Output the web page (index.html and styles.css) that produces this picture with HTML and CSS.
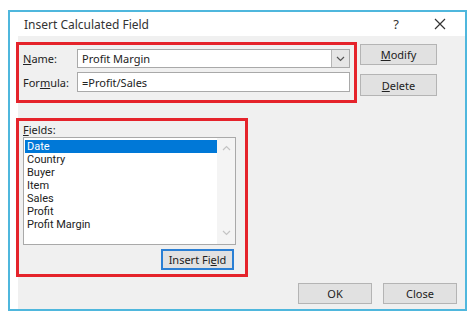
FILE: index.html
```html
<!DOCTYPE html>
<html>
<head>
<meta charset="utf-8">
<link rel="stylesheet" href="styles.css">
</head>
<body>
<div class="dialog">
  <div class="titlebar">
    <span class="title">Insert Calculated Field</span>
    <span class="help">?</span>
    <svg class="close-x" width="12" height="12" viewBox="0 0 12 12"><path d="M1 1 L11 11 M11 1 L1 11" stroke="#333" stroke-width="1.2" fill="none"/></svg>
  </div>
  <div class="content">
    <div class="top-row">
      <div class="mark mark-top">
        <label class="lbl"><u>N</u>ame:</label>
        <div class="combo">
          <span class="field-text">Profit Margin</span>
          <span class="drop">
            <svg width="9" height="6" viewBox="0 0 9 6"><path d="M1 1 L4.5 4.5 L8 1" stroke="#555" stroke-width="1.2" fill="none"/></svg>
          </span>
        </div>
        <label class="lbl">For<u>m</u>ula:</label>
        <div class="input"><span class="field-text">=Profit/Sales</span></div>
      </div>
      <div class="side-buttons">
        <button class="btn btn-modify"><u>M</u>odify</button>
        <button class="btn btn-delete"><u>D</u>elete</button>
      </div>
    </div>
    <div class="mark mark-fields">
      <div class="fields-label"><u>F</u>ields:</div>
      <div class="listbox">
        <ul class="items">
          <li class="sel">Date</li>
          <li>Country</li>
          <li>Buyer</li>
          <li>Item</li>
          <li>Sales</li>
          <li>Profit</li>
          <li>Profit Margin</li>
        </ul>
        <div class="scroll">
          <svg width="9" height="6" viewBox="0 0 9 6"><path d="M1 5 L4.5 1.5 L8 5" stroke="#c4c4c4" stroke-width="1.2" fill="none"/></svg>
          <svg width="9" height="6" viewBox="0 0 9 6"><path d="M1 1 L4.5 4.5 L8 1" stroke="#c4c4c4" stroke-width="1.2" fill="none"/></svg>
        </div>
      </div>
      <div class="insert-row">
        <button class="btn btn-insert">Insert Fi<u>e</u>ld</button>
      </div>
    </div>
    <div class="bottom-row">
      <button class="btn btn-ok">OK</button>
      <button class="btn btn-close">Close</button>
    </div>
  </div>
</div>
</body>
</html>
```
FILE: styles.css
```css
html, body {
  margin: 0;
  padding: 0;
  background: #ffffff;
}
body {
  font-family: "Noto Sans", "Open Sans", sans-serif;
  font-size: 11px;
  color: #222;
}
.dialog {
  margin: 10px 0 0 8px;
  width: 459px;
  height: 301px;
  border: 2px solid #4fb7dd;
  box-sizing: border-box;
  display: flex;
  flex-direction: column;
  background: #fff;
}
.titlebar {
  height: 24px;
  flex: 0 0 24px;
  display: flex;
  align-items: center;
  padding-left: 14px;
  color: #333;
  font-size: 12px;
}
.title {
  flex: 1;
}
.help {
  font-size: 13px;
  margin-right: 35px;
}
.close-x {
  margin-right: 19px;
}
.content {
  flex: 1;
  background: linear-gradient(to right, #fff 8px, #f0f0f0 8px);
  padding: 6px 0 0 6px;
  display: flex;
  flex-direction: column;
}
.top-row {
  display: flex;
  gap: 3px;
}
.mark {
  border: 3px solid #e5232b;
  box-sizing: border-box;
}
.mark-top {
  width: 341px;
  height: 61px;
  padding: 4px 4px 0 4px;
  display: grid;
  grid-template-columns: 54px 1fr;
  grid-template-rows: 19px 20px;
  row-gap: 4px;
  align-items: center;
}
.lbl {
  color: #222;
}
.combo, .input {
  height: 100%;
  background: #fff;
  border: 1px solid #a9a9a9;
  box-sizing: border-box;
  display: flex;
  align-items: center;
}
.field-text {
  flex: 1;
  padding-left: 4px;
  color: #222;
}
.drop {
  width: 17px;
  height: 100%;
  background: #e6e6e6;
  border-left: 1px solid #b5b5b5;
  display: flex;
  align-items: center;
  justify-content: center;
}
.side-buttons {
  display: flex;
  flex-direction: column;
  padding-top: 2px;
  gap: 9px;
}
.btn {
  font-family: inherit;
  font-size: 11px;
  color: #222;
  background: #e1e1e1;
  border: 1px solid #b4b4b4;
  box-sizing: border-box;
  padding: 0;
  margin: 0;
}
.btn-modify {
  width: 77px;
  height: 21px;
}
.btn-delete {
  width: 77px;
  height: 22px;
}
.mark-fields {
  margin-top: 15px;
  width: 232px;
  height: 159px;
  padding: 1px 9px 0 4px;
  display: flex;
  flex-direction: column;
}
.fields-label {
  height: 15px;
  line-height: 15px;
}
.listbox {
  height: 108px;
  background: #fff;
  border: 1px solid #a9a9a9;
  box-sizing: border-box;
  display: flex;
}
.items {
  list-style: none;
  margin: 0;
  padding: 2px 0 0 1px;
  flex: 1;
  font-family: Roboto, "Noto Sans", sans-serif;
  font-size: 11px;
}
.items li {
  height: 13px;
  line-height: 13px;
  padding-left: 2px;
}
.items li.sel {
  background: #0078d7;
  color: #fff;
}
.scroll {
  width: 18px;
  background: #f4f4f4;
  display: flex;
  flex-direction: column;
  align-items: center;
  justify-content: space-between;
  padding: 7px 0 8px;
  box-sizing: border-box;
}
.insert-row {
  display: flex;
  justify-content: flex-end;
  padding-right: 2px;
  margin-top: 4px;
}
.btn-insert {
  width: 73px;
  height: 21px;
  border: 2px solid #2a7fd4;
}
.bottom-row {
  display: flex;
  justify-content: flex-end;
  gap: 11px;
  padding-right: 8px;
  margin-top: 6px;
}
.btn-ok, .btn-close {
  width: 74px;
  height: 21px;
}
```
